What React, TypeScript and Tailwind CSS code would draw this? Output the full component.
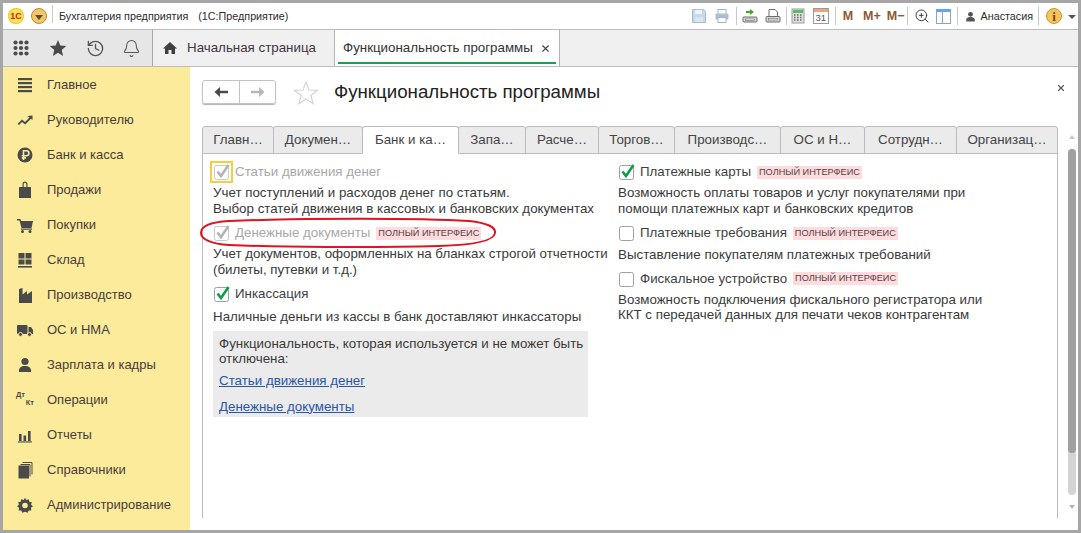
import type { ReactNode } from 'react';
import { Bell, History, ZoomIn, X } from 'lucide-react';

const FONT = '[font-family:"Liberation_Sans",Arial,sans-serif]';

function Ic({ children, w = 18, h = 18, vb = '0 0 18 18', cls = '' }: { children: ReactNode; w?: number; h?: number; vb?: string; cls?: string }) {
  return (
    <svg width={w} height={h} viewBox={vb} className={`block shrink-0 ${cls}`}>
      {children}
    </svg>
  );
}

const dark = '#4a4a4a';

const navIcons: Record<string, ReactNode> = {
  menu: (
    <g fill={dark}>
      <rect x="2" y="2" width="14" height="2.2" />
      <rect x="2" y="6" width="14" height="2.2" />
      <rect x="2" y="10" width="14" height="2.2" />
      <rect x="2" y="14" width="14" height="2.2" />
    </g>
  ),
  trend: <path d="M1.5 13 L6 8.5 L9 11 L13.5 6.5 L11.5 5 L16.5 4.5 L16.5 9 L15 7.8 L9.2 13.5 L6 11 L3 14 Z" fill={dark} />,
  ruble: (
    <g>
      <circle cx="9" cy="9" r="7.5" fill={dark} />
      <path d="M7.5 14 V4.8 H10.4 A2.5 2.5 0 0 1 10.4 9.8 H5.8 M5.8 11.9 H10" fill="none" stroke="#fbeb9b" strokeWidth="1.6" />
    </g>
  ),
  bag: <path d="M3 6 H6.5 V3 A2.5 2.5 0 0 1 11.5 3 V6 H15 V17 H3 Z M7.7 6 H10.3 V3 A1.3 1.3 0 0 0 7.7 3 Z" fill={dark} fillRule="evenodd" />,
  cart: (
    <g fill={dark}>
      <path d="M1 3 H4.5 L5 5 H17 L15.5 12 H5.5 L3.5 4.5 H1 Z" />
      <rect x="5" y="12.5" width="11" height="1.2" />
      <circle cx="6.5" cy="15.5" r="1.5" />
      <circle cx="14" cy="15.5" r="1.5" />
    </g>
  ),
  grid: (
    <g fill={dark}>
      <rect x="2.5" y="2" width="6" height="5.5" />
      <rect x="9.5" y="2" width="6" height="5.5" />
      <rect x="2.5" y="8.5" width="6" height="5" />
      <rect x="9.5" y="8.5" width="6" height="5" />
      <rect x="2" y="15" width="14" height="1.6" />
    </g>
  ),
  factory: <path d="M3 17 V3 L6.5 2 V8.5 L11 5 V8.5 L16 5 V17 Z" fill={dark} />,
  truck: (
    <g fill={dark}>
      <rect x="1" y="4" width="10.5" height="9" rx="1" />
      <path d="M12.5 6 H15 L17 9 V13 H12.5 Z" />
      <circle cx="4.5" cy="13.5" r="2" stroke="#fbeb9b" />
      <circle cx="13.5" cy="13.5" r="2" stroke="#fbeb9b" />
    </g>
  ),
  person: (
    <g fill={dark}>
      <circle cx="9" cy="5.5" r="3.6" />
      <path d="M3 16 V14 C3 11.5 6 10.5 7 10 H11 C12 10.5 15 11.5 15 14 V16 Z" />
    </g>
  ),
  chart: (
    <g fill={dark}>
      <rect x="3" y="8" width="2.6" height="7" />
      <rect x="7.5" y="9.5" width="2.6" height="5.5" />
      <rect x="12" y="5" width="2.6" height="10" />
      <rect x="2" y="15.4" width="14" height="1.1" />
    </g>
  ),
  books: (
    <g>
      <rect x="2.5" y="4.5" width="10.5" height="13" fill={dark} />
      <path d="M4.5 3.5 H14 V15.5 M6.5 1.5 H16 V13.5" fill="none" stroke={dark} />
    </g>
  ),
  gear: (
    <g>
      <path d="M9 1.8 L10.3 4 L12.8 3.2 L13.3 5.7 L15.9 6.2 L15 8.6 L16.9 10.2 L14.9 11.8 L15.4 14.4 L12.8 14.5 L11.6 16.8 L9 15.8 L6.4 16.8 L5.2 14.5 L2.6 14.4 L3.1 11.8 L1.1 10.2 L3 8.6 L2.1 6.2 L4.7 5.7 L5.2 3.2 L7.7 4 Z" fill={dark} />
      <circle cx="9" cy="9.5" r="2.8" fill="#fbeb9b" />
    </g>
  ),
};

const navItems = [
  { icon: 'menu', label: 'Главное' },
  { icon: 'trend', label: 'Руководителю' },
  { icon: 'ruble', label: 'Банк и касса' },
  { icon: 'bag', label: 'Продажи' },
  { icon: 'cart', label: 'Покупки' },
  { icon: 'grid', label: 'Склад' },
  { icon: 'factory', label: 'Производство' },
  { icon: 'truck', label: 'ОС и НМА' },
  { icon: 'person', label: 'Зарплата и кадры' },
  { icon: 'dtkt', label: 'Операции' },
  { icon: 'chart', label: 'Отчеты' },
  { icon: 'books', label: 'Справочники' },
  { icon: 'gear', label: 'Администрирование' },
];

const tabs = [
  { label: 'Главн…', w: 'w-[72px]' },
  { label: 'Докумен…', w: 'w-[90px]' },
  { label: 'Банк и ка…', w: 'w-[97px]', active: true },
  { label: 'Запа…', w: 'w-[68px]' },
  { label: 'Расче…', w: 'w-[74px]' },
  { label: 'Торгов…', w: 'w-[77px]' },
  { label: 'Производс…', w: 'w-[107px]' },
  { label: 'ОС и Н…', w: 'w-[85px]' },
  { label: 'Сотрудн…', w: 'w-[93px]' },
  { label: 'Организац…', w: 'w-[102px]' },
];

function Sep({ ml = '' }: { ml?: string }) {
  return <div className={`h-[18px] w-px bg-[#c8c8c8] ${ml}`} />;
}

function Check({ on, disabled }: { on?: boolean; disabled?: boolean }) {
  return (
    <svg width="18" height="18" viewBox="0 0 18 18" className="block shrink-0">
      <rect x="1.5" y="2.5" width="14" height="14" rx="2" fill="#fff" stroke={disabled ? '#c8c8c8' : '#a0a0a0'} />
      {on && (
        <path
          d="M4.5 8.5 L8 13 L15.5 2"
          fill="none"
          stroke={disabled ? '#b4b4b4' : '#0f9d4a'}
          strokeWidth="2.6"
        />
      )}
    </svg>
  );
}

function Badge() {
  return (
    <span className="ml-[6px] inline-block h-[13px] bg-[#fcdcdc] px-[2px] text-[9.2px] leading-[13px] text-[#5b3c48] whitespace-nowrap">
      ПОЛНЫЙ ИНТЕРФЕИС
    </span>
  );
}

function Option({ label, on, disabled, badge, focus, cls = '' }: { label: string; on?: boolean; disabled?: boolean; badge?: boolean; focus?: boolean; cls?: string }) {
  return (
    <div className={`flex h-[22px] items-center ${cls}`}>
      <div className={`flex h-[22px] w-[23px] items-center justify-center -ml-[3px] mr-[2px] ${focus ? 'border-2 border-[#f7cf3a]' : ''}`}>
        <Check on={on} disabled={disabled} />
      </div>
      <span className={disabled ? 'text-[#a8a8a8]' : 'text-[#3f3f3f]'}>{label}</span>
      {badge && <Badge />}
    </div>
  );
}

function Text({ children, cls = '' }: { children: ReactNode; cls?: string }) {
  return <p className={`leading-[15.5px] text-[#3a3a3a] ${cls}`}>{children}</p>;
}

export default function App() {
  return (
    <div className={`flex h-[533px] w-[1081px] flex-col overflow-hidden border-[3px] border-[#a6a6a6] bg-white ${FONT}`}>
      {/* title bar */}
      <div className="flex h-[26px] shrink-0 items-center bg-white pl-[5px] pr-[2px] text-[10.75px] text-[#2c2c2c]">
        <div className="flex h-[16px] w-[16px] items-center justify-center rounded-full bg-[#fbe54a] text-[9px] font-bold leading-none text-[#d3202a] shadow-[inset_0_0_0_1px_#e8c84a]">
          1С
        </div>
        <div className="ml-[7px] flex h-[16px] w-[16px] items-center justify-center rounded-full border border-[#b98a3a] bg-[#f6c66a]">
          <span className="mt-[2px] border-x-[4px] border-t-[5px] border-x-transparent border-t-[#5a4a3a]" />
        </div>
        <Sep ml="ml-[5px] -mt-1" />
        <span className="ml-[6px] whitespace-nowrap">Бухгалтерия предприятия</span>
        <span className="ml-[10px] whitespace-nowrap">(1С:Предприятие)</span>

        <div className="ml-auto flex items-center">
          <Ic w={16} h={16} vb="0 0 16 16">
            <path d="M1.5 1.5 H12.5 L14.5 3.5 V14.5 H1.5 Z" fill="#c6d8ea" stroke="#a6bdd4" />
            <rect x="4" y="2" width="7" height="4" fill="#eef4fa" />
            <rect x="4" y="9" width="8" height="5" fill="#dbe6f0" />
          </Ic>
          <Ic w={16} h={16} vb="0 0 16 16" cls="ml-[7px]">
            <rect x="4" y="1.5" width="8" height="5" fill="#fff" stroke="#9fb4c8" />
            <rect x="1.5" y="5.5" width="13" height="6" rx="1" fill="#a9bfd4" />
            <rect x="4" y="9.5" width="8" height="5" fill="#fff" stroke="#9fb4c8" />
          </Ic>
          <Sep ml="ml-[6px]" />
          <Ic w={16} h={16} vb="0 0 16 16" cls="ml-[5px]">
            <path d="M8 1 L12 4 L8 7 V5 H4 V3 H8 Z" fill="#37b01e" />
            <rect x="1" y="9" width="14" height="5" rx="1" fill="#d8d8d8" stroke="#6c6c6c" />
            <rect x="3.5" y="11" width="9" height="1.5" fill="#fff" stroke="#6c6c6c" strokeWidth="0.6" />
          </Ic>
          <Ic w={16} h={16} vb="0 0 16 16" cls="ml-[7px]">
            <path d="M4 8 V1.5 H10 L12.5 4 V8" fill="#fff" stroke="#6c6c6c" />
            <rect x="1" y="8.5" width="14" height="5.5" rx="1" fill="#d8d8d8" stroke="#6c6c6c" />
            <rect x="3.5" y="10.5" width="9" height="1.5" fill="#fff" stroke="#6c6c6c" strokeWidth="0.6" />
          </Ic>
          <Sep ml="ml-[5px]" />
          <Ic w={16} h={16} vb="0 0 16 16" cls="ml-[3px]">
            <rect x="2" y="1" width="12" height="14" fill="#e2e2e2" stroke="#9a9a9a" />
            <rect x="3" y="2" width="10" height="3" fill="#5dbb63" />
            <path d="M4 7 h1.5 M7 7 h1.5 M10 7 h1.5 M4 9.5 h1.5 M7 9.5 h1.5 M10 9.5 h1.5 M4 12 h1.5 M7 12 h1.5 M10 12 h1.5" stroke="#666" strokeWidth="1.3" />
          </Ic>
          <div className="ml-[7px] flex h-[16px] w-[16px] flex-col border border-[#9a9a9a] text-center text-[9.5px] leading-[12px] text-[#555]">
            <div className="h-[3px] shrink-0 bg-[#e8a878]" />
            31
          </div>
          <Sep ml="ml-[6px]" />
          <div className="ml-[7px] flex items-center text-[12.5px] font-bold leading-none text-[#8a5a34]">
            <span>M</span>
            <span className="ml-[10px]">M+</span>
            <span className="ml-[6px]">M−</span>
          </div>
          <Sep ml="ml-[2px]" />
          <ZoomIn size={16} strokeWidth={1.4} color="#333" className="ml-[6px]" />
          <div className="ml-[6px] flex h-[15px] w-[15px] border border-[#8aa6c0] border-t-[3px] border-t-[#62a9e4] bg-white">
            <div className="w-1/2 border-r border-[#8aa6c0]" />
          </div>
          <Sep ml="ml-[6px]" />
          <Ic w={11} h={11} vb="0 0 18 18" cls="ml-[7px]">
            <circle cx="9" cy="5.5" r="4" fill="#555" />
            <path d="M2 17 V14 C2 11.5 6 10.5 7 10 H11 C12 10.5 16 11.5 16 14 V17 Z" fill="#555" />
          </Ic>
          <span className="ml-[5px] whitespace-nowrap">Анастасия</span>
          <Sep ml="ml-[5px]" />
          <div className="ml-[7px] flex h-[16px] w-[16px] items-center justify-center rounded-full border border-[#c8963a] bg-[#f5c45e] font-['Liberation_Serif',serif] text-[13px] font-bold leading-none text-[#6a4a1a]">
            i
          </div>
          <span className="ml-[6px] mt-[2px] border-x-[4px] border-t-[4px] border-x-transparent border-t-[#555]" />
        </div>
      </div>

      {/* sections bar */}
      <div className="flex h-[38px] shrink-0 border-y border-[#bcbcbc] bg-[#f0f0f0]">
        <div className="flex w-[150px] items-center border-r border-[#a8a8a8] bg-[#e6e6e6] pl-[10px]">
          <Ic w={16} h={16} vb="0 0 16 16">
            <g fill="#4a4a4a">
              {[2.5, 8, 13.5].flatMap((y) =>
                [2.5, 8, 13.5].map((x) => <circle key={`${x}-${y}`} cx={x} cy={y} r="2.1" />)
              )}
            </g>
          </Ic>
          <Ic w={18} h={18} cls="ml-[20px]">
            <path d="M9 1 L11.3 6.6 L17.3 7.1 L12.7 11 L14.1 16.9 L9 13.7 L3.9 16.9 L5.3 11 L0.7 7.1 L6.7 6.6 Z" fill="#4a4a4a" />
          </Ic>
          <History size={19} strokeWidth={1.7} color="#555" className="ml-[19px]" />
          <Bell size={19} strokeWidth={1.3} color="#555" className="ml-[17px]" />
        </div>
        <div className="flex w-[182px] items-center border-r border-[#b4b4b4] pl-[10px] text-[13.33px] text-[#3f3440]">
          <Ic w={14} h={14} vb="0 0 14 14">
            <path d="M7 1 L14 7.5 H12 V13 H8.5 V9 H5.5 V13 H2 V7.5 H0 Z" fill="#3f3f3f" />
          </Ic>
          <span className="ml-[10px] whitespace-nowrap">Начальная страница</span>
        </div>
        <div className="relative flex w-[225px] items-center border-r border-[#b4b4b4] bg-white pl-[8px] text-[13.33px] text-[#333] whitespace-nowrap">
          Функциональность программы
          <X size={11} strokeWidth={2.4} color="#444" className="ml-[7px]" />
          <div className="absolute bottom-[2px] left-[3px] right-[3px] h-[2px] bg-[#1f9d55]" />
        </div>
      </div>

      <div className="flex min-h-0 flex-1">
        {/* sidebar */}
        <div className="w-[187px] shrink-0 bg-[#fbeb9b]">
          {navItems.map((item) => (
            <div key={item.label} className="flex h-[35px] items-center pl-[13px] text-[13px] text-[#4a3b3b]">
              {item.icon === 'dtkt' ? (
                <div className="flex h-[18px] w-[18px] shrink-0 flex-col text-[7.5px] font-bold leading-[8px] text-[#4a4a4a]">
                  <span>Дт</span>
                  <span className="self-end">Кт</span>
                </div>
              ) : (
                <Ic>{navIcons[item.icon]}</Ic>
              )}
              <span className="ml-[13px] whitespace-nowrap">{item.label}</span>
            </div>
          ))}
        </div>

        {/* form */}
        <div className="relative flex min-w-0 flex-1 flex-col text-[13.33px]">
          <div className="flex h-[59px] shrink-0 items-start pl-[12px] pt-[13px]">
            <div className="flex h-[24px] w-[74px] rounded-[3px] border border-[#c4c4c4] shadow-[0_1px_1px_#b0b0b0]">
              <div className="flex w-[37px] items-center justify-center border-r border-[#c4c4c4]">
                <Ic w={16} h={12} vb="0 0 16 12">
                  <path d="M7 1 L1.5 6 L7 11 V7.3 H15 V4.7 H7 Z" fill="#4a4a4a" />
                </Ic>
              </div>
              <div className="flex flex-1 items-center justify-center">
                <Ic w={16} h={12} vb="0 0 16 12">
                  <path d="M9 1 L14.5 6 L9 11 V7.3 H1 V4.7 H9 Z" fill="#b8b8b8" />
                </Ic>
              </div>
            </div>
            <Ic w={26} h={26} vb="0 0 26 26" cls="ml-[17px]">
              <path d="M13 2 L16 10 L24.5 10.3 L17.8 15.5 L20.2 23.7 L13 19 L5.8 23.7 L8.2 15.5 L1.5 10.3 L10 10 Z" fill="none" stroke="#d4d4d4" strokeWidth="1.2" />
            </Ic>
            <h1 className="ml-[15px] text-[18.7px] font-normal leading-[24px] text-[#222] whitespace-nowrap">Функциональность программы</h1>
            <X size={10} strokeWidth={2.6} color="#555" className="ml-auto mr-[12px] mt-[3px]" />
          </div>

          <div className="flex min-h-0 flex-1">
            <div className="ml-[12px] w-[856px] shrink-0">
              <div className="flex h-[28px]">
                {tabs.map((t) => (
                  <div
                    key={t.label}
                    className={`flex ${t.w} -mr-px items-center justify-center rounded-t-[3px] border border-[#bcbcbc] text-[#444] whitespace-nowrap ${
                      t.active ? 'relative z-10 border-b-white bg-white' : 'bg-[#ebebeb]'
                    }`}
                  >
                    {t.label}
                  </div>
                ))}
              </div>
              <div className="-mt-px grid h-[365px] grid-cols-[405px_1fr] border-l border-r border-t border-[#bcbcbc] pl-[10px] pt-[7px]">
                <div>
                  <Option label="Статьи движения денег" on disabled focus />
                  <Text cls="mt-[2px]">
                    Учет поступлений и расходов денег по статьям.
                    <br />
                    Выбор статей движения в кассовых и банковских документах
                  </Text>
                  <Option label="Денежные документы" on disabled badge cls="mt-[6px]" />
                  <Text cls="mt-[2px]">
                    Учет документов, оформленных на бланках строгой отчетности
                    <br />
                    (билеты, путевки и т.д.)
                  </Text>
                  <Option label="Инкассация" on cls="mt-[6px]" />
                  <Text cls="mt-[4px]">Наличные деньги из кассы в банк доставляют инкассаторы</Text>
                  <div className="mt-[6px] h-[86px] w-[375px] bg-[#ebebeb] pl-[6px] pt-[5px]">
                    <Text cls="!leading-[15px]">
                      Функциональность, которая используется и не может быть
                      <br />
                      отключена:
                    </Text>
                    <a className="mt-[7px] block leading-[15px] text-[#2a56a8] underline">Статьи движения денег</a>
                    <a className="mt-[11px] block leading-[15px] text-[#2a56a8] underline">Денежные документы</a>
                  </div>
                </div>
                <div>
                  <Option label="Платежные карты" on badge />
                  <Text cls="mt-[2px]">
                    Возможность оплаты товаров и услуг покупателями при
                    <br />
                    помощи платежных карт и банковских кредитов
                  </Text>
                  <Option label="Платежные требования" badge cls="mt-[6px]" />
                  <Text cls="mt-[3px]">Выставление покупателям платежных требований</Text>
                  <Option label="Фискальное устройство" badge cls="mt-[5px]" />
                  <Text cls="mt-[2px]">
                    Возможность подключения фискального регистратора или
                    <br />
                    ККТ с передачей данных для печати чеков контрагентам
                  </Text>
                </div>
              </div>
            </div>
            {/* scrollbar */}
            <div className="ml-[9px] flex w-[10px] flex-col items-center pt-[9px]">
              <span className="border-x-[3px] border-b-[4px] border-x-transparent border-b-[#c8c8c8]" />
              <div className="mt-[10px] h-[346px] w-[8px] shrink-0 rounded-full bg-[#d4d4d4]">
                <div className="h-[304px] rounded-full bg-[#a0a0a0]" />
              </div>
              <span className="mt-[10px] border-x-[3px] border-t-[4px] border-x-transparent border-t-[#b4b4b4]" />
            </div>
          </div>

          {/* hand-drawn highlight round the second option */}
          <svg width="300" height="32" viewBox="0 0 300 32" className="absolute left-[9px] top-[150px]">
            <path
              d="M30 4 C110 1 220 1 270 4 C288 6 297 10 296 16 C295 24 275 28 240 29 C170 31 80 30 30 28 C12 27 2 22 2 16 C2 9 12 5 30 4 Z"
              fill="none"
              stroke="#e0131f"
              strokeWidth="2"
            />
          </svg>
        </div>
      </div>
    </div>
  );
}
